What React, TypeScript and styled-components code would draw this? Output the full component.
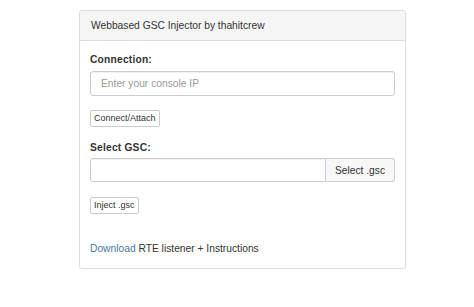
import styled, { createGlobalStyle } from 'styled-components';

const GlobalStyle = createGlobalStyle`
  html, body {
    margin: 0;
    padding: 0;
    background: #ffffff;
  }
  body {
    font-family: "Liberation Sans", Arial, sans-serif;
    font-size: 10.25px;
    color: #333333;
  }
`;

const Page = styled.div`
  padding: 10px 0 0 79px;
`;

const Panel = styled.div`
  width: 325px;
  border: 1px solid #dddddd;
  border-radius: 3px;
  background: #ffffff;
  box-shadow: 0 1px 1px rgba(0, 0, 0, 0.05);
`;

const PanelHeading = styled.div`
  height: 29px;
  display: flex;
  align-items: center;
  padding: 0 11px;
  background: #f5f5f5;
  border-bottom: 1px solid #dddddd;
  border-radius: 3px 3px 0 0;
  font-size: 10.25px;
  color: #333333;
`;

const PanelBody = styled.div`
  display: flex;
  flex-direction: column;
  align-items: flex-start;
  padding: 12px 10px 12px;
`;

const Label = styled.div<{ $top?: number }>`
  margin-top: ${p => p.$top ?? 0}px;
  font-weight: bold;
  font-size: 10.25px;
  line-height: 14px;
  letter-spacing: 0.2px;
  color: #333333;
`;

const TextInput = styled.input`
  box-sizing: border-box;
  width: 100%;
  height: 25px;
  margin-top: 4px;
  padding: 0 10px;
  border: 1px solid #cccccc;
  border-radius: 3px;
  font-family: inherit;
  font-size: 10.25px;
  color: #555555;
  box-shadow: inset 0 1px 1px rgba(0, 0, 0, 0.06);
  outline: none;
  &::placeholder {
    color: #999999;
  }
`;

const InputGroup = styled.div`
  display: flex;
  width: 100%;
  height: 24px;
  margin-top: 3px;
`;

const GroupInput = styled(TextInput)`
  flex: 1;
  height: 24px;
  margin-top: 0;
  border-radius: 3px 0 0 3px;
`;

const Addon = styled.div`
  box-sizing: border-box;
  width: 69px;
  display: flex;
  align-items: center;
  justify-content: center;
  border: 1px solid #cccccc;
  border-left: none;
  border-radius: 0 3px 3px 0;
  background: #f7f7f7;
  font-size: 10.25px;
  color: #333333;
`;

const SmallButton = styled.button<{ $top: number }>`
  box-sizing: border-box;
  height: 17px;
  margin-top: ${p => p.$top}px;
  padding: 0 3px;
  border: 1px solid #cccccc;
  border-radius: 2px;
  background: #ffffff;
  font-family: inherit;
  font-size: 9px;
  line-height: 15px;
  color: #333333;
`;

const Footer = styled.div`
  margin-top: 28px;
  font-size: 10.25px;
  line-height: 14px;
  color: #333333;
`;

const Link = styled.a`
  color: #4a78a8;
  text-decoration: none;
`;

export default function App() {
  return (
    <>
      <GlobalStyle />
      <Page>
        <Panel>
          <PanelHeading>Webbased GSC Injector by thahitcrew</PanelHeading>
          <PanelBody>
            <Label>Connection:</Label>
            <TextInput placeholder="Enter your console IP" />
            <SmallButton $top={14}>Connect/Attach</SmallButton>
            <Label $top={14}>Select GSC:</Label>
            <InputGroup>
              <GroupInput />
              <Addon>Select .gsc</Addon>
            </InputGroup>
            <SmallButton $top={15}>Inject .gsc</SmallButton>
            <Footer>
              <Link href="#">Download</Link> RTE listener + Instructions
            </Footer>
          </PanelBody>
        </Panel>
      </Page>
    </>
  );
}
